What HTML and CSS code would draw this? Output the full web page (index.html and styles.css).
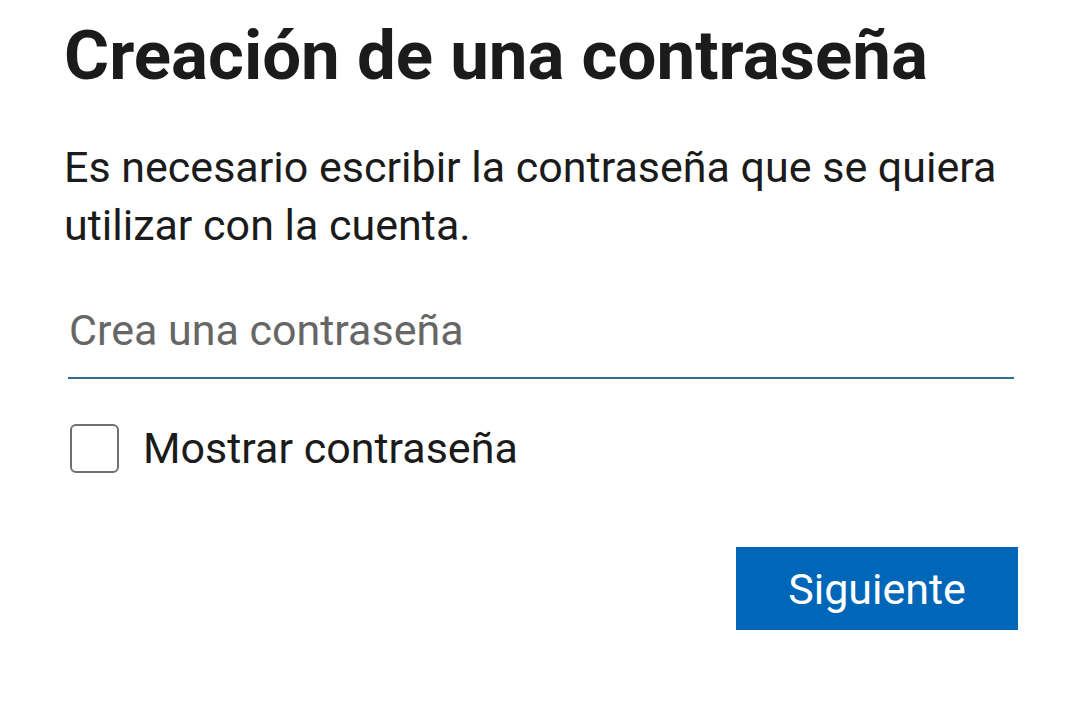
FILE: index.html
```html
<!DOCTYPE html>
<html lang="es">
<head>
<meta charset="utf-8">
<title>Creación de una contraseña</title>
<link rel="stylesheet" href="styles.css">
</head>
<body>
<main class="page">
  <h1 class="title">Creación de una contraseña</h1>
  <p class="intro">Es necesario escribir la contraseña que se quiera utilizar con la cuenta.</p>
  <div class="field">
    <input class="field-input" type="password" placeholder="Crea una contraseña">
  </div>
  <label class="check-row">
    <span class="check-box"></span>
    <span class="check-label">Mostrar contraseña</span>
  </label>
  <div class="actions">
    <button class="btn-primary" type="button">Siguiente</button>
  </div>
</main>
</body>
</html>
```

FILE: styles.css
```css
html, body {
  margin: 0;
  padding: 0;
  background: #ffffff;
}

body {
  font-family: Roboto, "Noto Sans", Arial, sans-serif;
  color: #1b1b1b;
}

.page {
  display: flex;
  flex-direction: column;
  padding: 14px 62px 0 64px;
}

.title {
  margin: 0;
  font-size: 69px;
  line-height: 84px;
  font-weight: 700;
  color: #1b1b1b;
}

.intro {
  margin: 40px 0 0 0;
  font-size: 43px;
  line-height: 58px;
  font-weight: 400;
  color: #1b1b1b;
}

.field {
  margin: 48px 4px 0 4px;
  border-bottom: 2px solid #2f6e8c;
}

.field-input {
  display: block;
  width: 100%;
  box-sizing: border-box;
  border: none;
  outline: none;
  background: transparent;
  padding: 0 0 19px 1px;
  font-family: Roboto, "Noto Sans", Arial, sans-serif;
  font-size: 43px;
  line-height: 56px;
  height: 75px;
  color: #1b1b1b;
}

.field-input::placeholder {
  color: #666666;
}

.check-row {
  display: flex;
  align-items: center;
  gap: 24px;
  margin: 43px 0 0 6px;
}

.check-box {
  width: 45px;
  height: 45px;
  border: 2px solid #707070;
  border-radius: 6px;
  flex: none;
}

.check-label {
  font-size: 43px;
  line-height: 52px;
  color: #1b1b1b;
}

.actions {
  display: flex;
  justify-content: flex-end;
  margin-top: 73px;
}

.btn-primary {
  width: 282px;
  height: 83px;
  border: none;
  background: #0067b8;
  color: #ffffff;
  font-family: Roboto, "Noto Sans", Arial, sans-serif;
  font-size: 43px;
  padding: 0;
}
```
